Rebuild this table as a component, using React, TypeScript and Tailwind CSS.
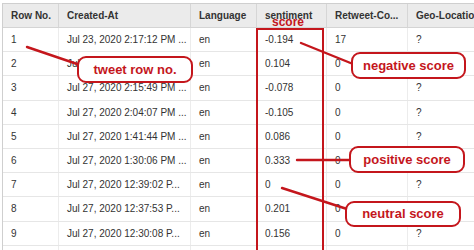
const rows = [
  ["1", "Jul 23, 2020 2:17:12 PM ...", "en", "-0.194", "17", "?"],
  ["2", "Jul 23, 2020 2:08:55 PM ...", "en", "0.104", "0", "?"],
  ["3", "Jul 27, 2020 2:15:49 PM ...", "en", "-0.078", "0", "?"],
  ["4", "Jul 27, 2020 2:04:07 PM ...", "en", "-0.105", "0", "?"],
  ["5", "Jul 27, 2020 1:41:44 PM ...", "en", "0.086", "0", "?"],
  ["6", "Jul 27, 2020 1:30:06 PM ...", "en", "0.333", "0", "?"],
  ["7", "Jul 27, 2020 12:39:02 P...", "en", "0", "0", "?"],
  ["8", "Jul 27, 2020 12:37:53 P...", "en", "0.201", "0", "?"],
  ["9", "Jul 27, 2020 12:30:08 P...", "en", "0.156", "0", "?"],
  ["10", "Jul 27, 2020 12:20:41 P...", "en", "0.12", "0", "?"],
];

const headers = ["Row No.", "Created-At", "Language", "sentiment", "Retweet-Co...", "Geo-Locatio..."];

const cols = "grid grid-cols-[56px_132px_66px_70px_81px_110px]";

function Callout({ label, className }: { label: string; className: string }) {
  return (
    <div
      className={`absolute flex items-center justify-center rounded-[9px] border-2 border-[#c4161c] bg-white text-[13px] font-bold text-[#c4161c] ${className}`}
    >
      {label}
    </div>
  );
}

export default function App() {
  return (
    <div className="relative h-[250px] w-[474px] overflow-hidden bg-white pl-[2px] pt-[3px] font-['Liberation_Sans',Arial,sans-serif] text-[10px] text-[#333]">
      <div className="border-l border-t border-[#cfcfcf]">
        <div className={`${cols} h-[24px] border-b border-[#d4d4d4] bg-[#ebebeb] font-bold`}>
          {headers.map((h) => (
            <div key={h} className="flex items-center border-r border-[#d6d6d6] px-[8px] pb-[1px] whitespace-nowrap">
              {h}
            </div>
          ))}
        </div>
        {rows.map((r) => (
          <div key={r[0]} className={`${cols} h-[24.2px] border-b border-[#e6e6e6]`}>
            {r.map((c, i) => (
              <div key={i} className="flex items-center border-r border-[#ececec] px-[8px] whitespace-nowrap">
                {c}
              </div>
            ))}
          </div>
        ))}
      </div>

      {/* annotations */}
      <div className="absolute left-[272px] top-[16px] text-[12px] font-bold leading-none text-[#c4161c]">score</div>
      <div className="absolute left-[256px] top-[28px] h-[240px] w-[68px] border-2 border-[#c4161c]" />

      <svg className="absolute left-0 top-0" width="474" height="250">
        <g stroke="#c4161c" strokeWidth="2.4" strokeLinecap="round">
          <line x1="27" y1="47" x2="80" y2="65" />
          <line x1="301" y1="43" x2="353" y2="64" />
          <line x1="297" y1="160" x2="351" y2="160" />
          <line x1="282" y1="188" x2="347" y2="209" />
        </g>
      </svg>

      <Callout label="tweet row no." className="left-[77px] top-[56px] h-[27px] w-[116px]" />
      <Callout label="negative score" className="left-[351px] top-[52px] h-[27px] w-[115px]" />
      <Callout label="positive score" className="left-[349px] top-[146px] h-[27px] w-[116px]" />
      <Callout label="neutral score" className="left-[345px] top-[201px] h-[26px] w-[116px]" />
    </div>
  );
}
